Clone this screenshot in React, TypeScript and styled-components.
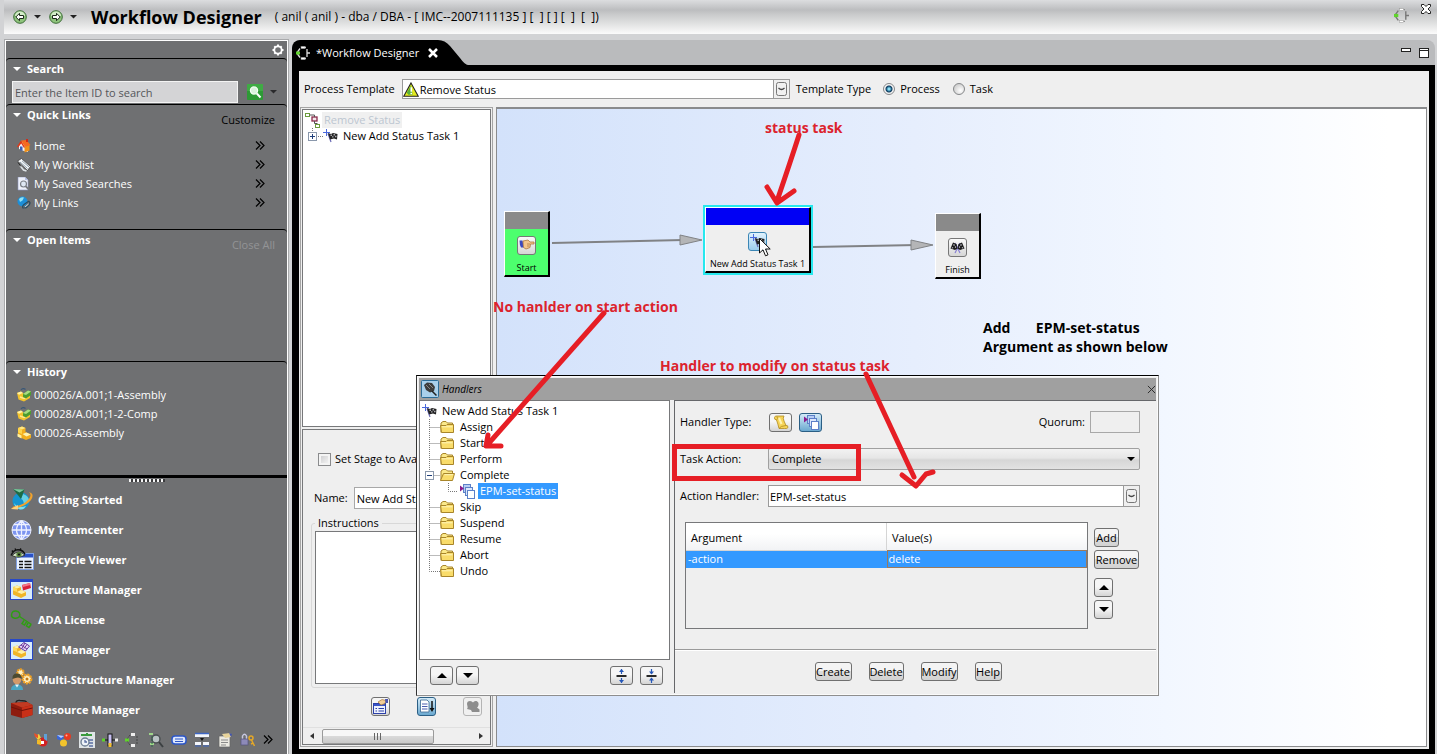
import React from "react";
import styled, { createGlobalStyle, css } from "styled-components";

const Global = createGlobalStyle`
  *, *::before, *::after { box-sizing: border-box; }
  body { margin: 0; background: #d2d3d5; }
  body, button, input, select, textarea {
    font-family: "Open Sans", "Noto Sans", sans-serif;
    font-size: 11px;
    line-height: 16px;
    color: #000;
  }
  button, input, select, textarea { margin: 0; border-radius: 0; }
  button { padding: 0; }
  h1, h2, p, ul { margin: 0; padding: 0; }
  a { color: inherit; text-decoration: none; }
  svg { display: block; flex: none; }
`;

/* ---------- shell ---------- */

const Shell = styled.div`
  display: flex;
  flex-direction: column;
  min-height: 100vh;
  background: #d2d3d5;
`;

const TitleBar = styled.header`
  display: flex;
  align-items: center;
  height: 34px;
  margin-left: 4px;
  margin-bottom: 6px;
  padding-left: 9px;
  background: linear-gradient(#dcdddf 0, #bcbdbf 10px, #c8c9ca 14px, #f6f6f6 32px, #fbfbfb 34px);
`;

const IconButton = styled.button<{ $gap?: number }>`
  display: flex;
  align-items: center;
  justify-content: center;
  border: 0;
  background: none;
  margin-right: ${(p) => p.$gap ?? 0}px;
`;

const Title = styled.h1`
  margin-left: 10px;
  font-size: 18px;
  line-height: 24px;
  white-space: nowrap;
`;

const Session = styled.span`
  margin-left: 13px;
  flex: 1;
  font-size: 12px;
  white-space: pre;
`;

const TitleActions = styled.div`
  display: flex;
  align-items: flex-start;
  gap: 12px;
  height: 34px;
  padding: 4px 6px 0 0;

  button:first-child { margin-top: 4px; }
`;

const Workspace = styled.div`
  display: flex;
  flex: 1;
  padding-left: 5px;
`;

/* ---------- sidebar ---------- */

const Sidebar = styled.aside`
  display: flex;
  flex-direction: column;
  width: 283px;
  margin-right: 4px;
  border: 1px solid #fff;
  border-bottom: 0;
  background: #6f7072;
  color: #fff;
  flex: none;
  outline: 1px solid #a9aaac;
`;

const SidebarTop = styled.div`
  display: flex;
  align-items: center;
  justify-content: flex-end;
  height: 17px;
  padding-right: 3px;
`;

const Section = styled.section<{ $height: number; $grow?: boolean }>`
  min-height: ${(p) => p.$height}px;
  ${(p) => p.$grow && css`flex: 1;`}
  border-top: 1px solid #000;
  border-radius: 4px;
  padding: 0 6px;
`;

const SectionHead = styled.div`
  display: flex;
  align-items: center;
  height: 20px;
`;

const Heading = styled.h2`
  display: flex;
  align-items: center;
  gap: 6px;
  flex: 1;
  padding-left: 1px;
  font-size: 11px;
  line-height: 20px;
`;

const HeadLink = styled.a<{ $dim?: boolean }>`
  margin: 10px 6px 0 0;
  color: ${(p) => (p.$dim ? "#939496" : "#000")};
`;

const SearchRow = styled.form`
  display: flex;
  align-items: center;
  margin-top: 2px;
`;

const SearchInput = styled.input`
  width: 226px;
  height: 22px;
  padding: 0 2px;
  border: 1px solid #f4f4f4;
  background: #d4d4d6;
  margin-right: 9px;

  &::placeholder { color: #55565a; opacity: 1; }
`;

const LinkList = styled.ul<{ $top: number }>`
  list-style: none;
  padding-top: ${(p) => p.$top}px;
`;

const LinkItem = styled.li`
  display: flex;
  align-items: center;
  gap: 3px;
  height: 19px;
  padding: 0 16px 0 5px;

  a { flex: 1; }
`;

const NavPane = styled.nav`
  border-top: 3px solid #000;
`;

const Grip = styled.div`
  width: 36px;
  height: 3px;
  margin: 1px auto 3px;
  background: repeating-linear-gradient(90deg, #f4f4f4 0 2px, #3c3c3e 2px 4px);
`;

const NavItem = styled.a`
  display: flex;
  align-items: center;
  gap: 4px;
  height: 30px;
  padding-left: 4px;
  font-weight: bold;
`;

const IconStrip = styled.div`
  display: flex;
  align-items: center;
  gap: 7px;
  height: 29px;
  padding-left: 27px;
`;

/* ---------- editor ---------- */

const Editor = styled.main`
  display: flex;
  flex-direction: column;
  flex: 1;
  min-width: 0;
  margin-right: 2px;
`;

const TabBar = styled.div`
  display: flex;
  align-items: stretch;
  justify-content: space-between;
  height: 25px;
  background: #babbbd;
  border-radius: 8px 8px 0 0;
  overflow: hidden;
`;

const Tab = styled.div`
  display: flex;
`;

const TabFace = styled.div`
  display: flex;
  align-items: center;
  gap: 6px;
  padding-left: 4px;
  background: #000;
  color: #fff;
  border-radius: 6px 0 0 0;

  button { margin-left: 3px; }
`;

const WindowButtons = styled.div`
  display: flex;
  align-items: center;
  gap: 8px;
  padding-right: 6px;
`;

const EditorBody = styled.div`
  position: relative;
  display: flex;
  flex-direction: column;
  flex: 1;
  border: solid #000;
  border-width: 6px 6px 5px 7px;
  background: #efefef;
`;

const Toolbar = styled.div`
  display: flex;
  align-items: center;
  height: 36px;
  padding-left: 5px;
`;

const Field = styled.div<{ $width?: number; $height: number }>`
  display: flex;
  align-items: center;
  ${(p) => (p.$width ? css`width: ${p.$width}px;` : css`flex: 1;`)}
  height: ${(p) => p.$height}px;
  border: 1px solid #9a9a9a;
  background: #fff;

  input { flex: 1; min-width: 0; height: 100%; border: 0; padding: 0 1px; background: none; }
`;

const DropButton = styled.button`
  display: flex;
  align-items: center;
  justify-content: center;
  align-self: stretch;
  width: 16px;
  border: 0;
  border-left: 1px solid #9a9a9a;
  background: #efefef;
`;

const ToolLabel = styled.label<{ $before?: number; $after?: number }>`
  margin-left: ${(p) => p.$before ?? 0}px;
  margin-right: ${(p) => p.$after ?? 0}px;
  white-space: nowrap;
`;

const Radio = styled.input`
  appearance: none;
  width: 12px;
  height: 12px;
  border: 1px solid #858789;
  border-radius: 50%;
  background: radial-gradient(circle at 65% 65%, #fff 0, #d8d8d8 60%, #c4c4c4 100%);

  &:checked {
    background: radial-gradient(circle, #8fdcf0 0 1px, #2f7ea3 2px, #123a5c 3px, #f4f4f4 4px);
  }
`;

const Split = styled.div`
  display: flex;
  flex: 1;
  padding: 0 2px 2px 1px;
`;

const LeftColumn = styled.div`
  display: flex;
  flex-direction: column;
  gap: 2px;
  width: 193px;
  margin-right: 3px;
  padding: 1px;
  border: 1px solid #a4a4a4;
  flex: none;
`;

const TreeBox = styled.div`
  flex: 1;
  border: 1px solid #77787a;
  background: #fff;
  padding: 2px 0 0 2px;
`;

const TreeRow = styled.div`
  display: flex;
  align-items: center;
  height: 16px;
  white-space: nowrap;
`;

const TreeLabel = styled.span<{ $state?: "faded" | "selected" }>`
  margin-left: 3px;
  padding: 0 2px;
  ${(p) => p.$state === "faded" && css`margin-left: 1px; color: #bcc6d0; background: #f0f0f0;`}
  ${(p) => p.$state === "selected" && css`color: #fff; background: #3399ff;`}
`;

const TaskPanel = styled.div`
  display: flex;
  flex-direction: column;
  height: 316px;
  border: 1px solid #77787a;
  overflow: hidden;
  white-space: nowrap;
`;

const StageRow = styled.label`
  display: flex;
  align-items: center;
  gap: 4px;
  margin: 21px 0 0 15px;
`;

const Check = styled.input`
  appearance: none;
  flex: none;
  width: 13px;
  height: 13px;
  border: 1px solid #8a8b8d;
  background: linear-gradient(135deg, #c8c8ca, #fafafa);
  box-shadow: inset 0 0 0 2px #f4f4f4;
`;

const NameRow = styled.div`
  display: flex;
  align-items: center;
  gap: 6px;
  margin: 20px 0 0 11px;

  input { width: 200px; height: 22px; border: 1px solid #a8a8a8; padding: 0 2px; flex: none; }
`;

const Instructions = styled.fieldset`
  width: 250px;
  height: 173px;
  margin: 6px 0 0 8px;
  padding: 0 3px;
  border: 1px solid #d8d8d8;
  border-radius: 3px;

  legend { padding: 0 3px; }
  textarea { display: block; width: 236px; height: 153px; border: 1px solid #77787a; resize: none; }
`;

const PanelButtons = styled.div`
  display: flex;
  gap: 27px;
  margin: 9px 0 0 68px;
`;

const ToolButton = styled.button<{ $w: number; $h: number; $on?: boolean; $off?: boolean }>`
  display: flex;
  align-items: center;
  justify-content: center;
  width: ${(p) => p.$w}px;
  height: ${(p) => p.$h}px;
  border: 1px solid ${(p) => (p.$off ? "#b4b4b4" : p.$on ? "#2b5f85" : "#707070")};
  border-radius: 3px;
  background: ${(p) =>
    p.$off ? "#f0f0f0" : p.$on ? "linear-gradient(#d4ebf8, #6ba9d0)" : "linear-gradient(#f6f6f6 45%, #d4d4d4)"};
  flex: none;
`;

const ScrollBar = styled.div`
  display: flex;
  align-items: center;
  gap: 8px;
  height: 17px;
  margin-top: auto;
  padding: 0 7px;
  border-top: 1px solid #e0e0e0;
`;

const Thumb = styled.div`
  display: flex;
  align-items: center;
  justify-content: center;
  width: 112px;
  height: 15px;
  margin-right: auto;
  border: 1px solid #9b9b9b;
  border-radius: 2px;
  background: linear-gradient(#f7f7f7 45%, #d9d9d9 50%, #c9c9c9);
`;

/* ---------- process diagram ---------- */

const Canvas = styled.div`
  position: relative;
  flex: 1;
  min-width: 0;
  border: 1px solid #8a8b8d;
  border-top-width: 2px;
  background: linear-gradient(90deg, #d3e2fb, #e6eefd 45%, #f2f7ff 72%, #fff 96%);
`;

const Flow = styled.svg`
  position: absolute;
  left: 0;
  top: 0;
`;

const Node = styled.div<{ $x: number; $y: number; $w: number; $fill?: string; $selected?: boolean }>`
  position: absolute;
  left: ${(p) => p.$x}px;
  top: ${(p) => p.$y}px;
  width: ${(p) => p.$w}px;
  height: 66px;
  display: flex;
  flex-direction: column;
  align-items: center;
  justify-content: space-between;
  border: solid;
  border-width: 1px 2px 2px 1px;
  border-color: #fff #000 #000 #fff;
  background: ${(p) => p.$fill ?? "#efefef"};
  outline: ${(p) => (p.$selected ? "2px solid #27e8ee" : "0")};
  font-size: 9px;
  line-height: 14px;
  white-space: nowrap;
`;

const NodeHead = styled.div<{ $color: string }>`
  width: 100%;
  height: 17px;
  background: ${(p) => p.$color};
`;

const NodeIcon = styled.div<{ $on?: boolean }>`
  display: flex;
  align-items: center;
  justify-content: center;
  width: 19px;
  height: 19px;
  border: 1px solid ${(p) => (p.$on ? "#3b86b5" : "#777")};
  border-radius: 3px;
  background: ${(p) => (p.$on ? "linear-gradient(#e0f2fd, #9dcdee)" : "linear-gradient(#fafafa, #d6d6d6)")};
`;

const Pointer = styled.svg`
  position: absolute;
  left: 53px;
  top: 30px;
`;

/* ---------- handlers window ---------- */

const Dialog = styled.section`
  position: absolute;
  left: 117px;
  top: 304px;
  width: 743px;
  height: 321px;
  display: flex;
  flex-direction: column;
  padding: 2px;
  border: 1px solid #8e8e8e;
  border-top-color: #000;
  border-left-color: #333;
  background: #efefef;
  box-shadow: inset 0 0 0 1px #fafafa;
`;

const DialogTitle = styled.div`
  display: flex;
  align-items: center;
  height: 22px;
  padding: 0 0 0 2px;
  background: #a0a0a0;
  font-size: 10px;
  font-style: italic;

  span { flex: 1; margin-left: 3px; }
`;

const DialogBody = styled.div`
  display: flex;
  flex: 1;
  min-height: 0;
`;

const HandlerSide = styled.div`
  display: flex;
  flex-direction: column;
  width: 251px;
  margin-right: 4px;
`;

const HandlerTree = styled.div`
  height: 260px;
  border: 1px solid #77787a;
  background: #fff;
  padding: 2px 0 0 2px;
`;

const SideButtons = styled.div`
  display: flex;
  gap: 3px;
  padding: 6px 7px 0 11px;

  button:nth-child(3) { margin-left: auto; margin-right: 4px; }
`;

const HandlerForm = styled.form`
  display: flex;
  flex-direction: column;
  flex: 1;
  min-width: 0;
  border-left: 1px solid #66676a;
  border-top: 1px solid #66676a;
`;

const FormRow = styled.div<{ $top: number }>`
  display: flex;
  align-items: center;
  height: 22px;
  margin: ${(p) => p.$top}px 16px 0 5px;

  & > label:first-child, & > span:first-child { width: 88px; white-space: nowrap; }
`;

const TypeButtons = styled.div`
  display: flex;
  flex: 1;
  gap: 7px;
  padding-left: 1px;
`;

const Quorum = styled.input`
  width: 50px;
  height: 22px;
  margin-left: 5px;
  border: 1px solid #a8a8a8;
  background: #efefef;
`;

const SelectWrap = styled.div`
  position: relative;
  flex: 1;

  select {
    appearance: none;
    display: block;
    width: 100%;
    height: 22px;
    padding: 0 3px;
    border: 1px solid #a0a0a0;
    border-radius: 2px;
    background: linear-gradient(#f2f2f2 0, #e6e6e6 45%, #d6d6d6 55%, #e2e2e2);
  }
  svg { position: absolute; right: 5px; top: 9px; pointer-events: none; }
`;

const ArgArea = styled.div`
  display: flex;
  gap: 6px;
  margin: 15px 16px 0 10px;
`;

const ArgFrame = styled.div`
  flex: 1;
  height: 107px;
  border: 1px solid #77787a;
`;

const ArgTable = styled.table`
  width: 100%;
  border-collapse: collapse;
  table-layout: fixed;

  th, td { text-align: left; font-weight: normal; }
  th {
    height: 27px;
    padding: 3px 5px 0;
    border-bottom: 1px solid #d5d5d5;
    background: linear-gradient(#fff 40%, #f2f3f5);
  }
  th + th { border-left: 1px solid #d5d5d5; }
  td { height: 18px; padding: 0 2px; background: #3399ff; color: #fff; }
  td + td { outline: 1px solid #9c7a5c; outline-offset: -1px; }
`;

const ArgButtons = styled.div`
  display: flex;
  flex-direction: column;
  align-items: flex-start;
  gap: 3px;
  width: 46px;
  padding-top: 6px;
`;

const TextButton = styled.button<{ $w: number }>`
  display: flex;
  align-items: center;
  justify-content: center;
  width: ${(p) => p.$w}px;
  height: 19px;
  border: 1px solid #707070;
  border-radius: 3px;
  background: linear-gradient(#f4f4f4 45%, #dcdcdc 50%, #d2d2d2);
`;

const ArrowPair = styled.div`
  display: flex;
  flex-direction: column;
  gap: 3px;
  margin-top: 6px;
`;

const FormFoot = styled.div`
  display: flex;
  align-items: center;
  justify-content: center;
  gap: 17px;
  flex: 1;
  margin-top: 20px;
  padding-right: 15px;
  border-top: 1px solid #9a9a9a;
  box-shadow: inset 0 1px 0 #fff;
`;

/* ---------- callouts ---------- */

const Note = styled.p<{ $x: number; $y: number; $color?: string }>`
  position: absolute;
  left: ${(p) => p.$x}px;
  top: ${(p) => p.$y}px;
  color: ${(p) => p.$color ?? "#dc232d"};
  font-family: "Open Sans", "Noto Sans", sans-serif;
  font-size: 14px;
  font-weight: bold;
  line-height: 19px;
  white-space: pre;
`;

const Frame = styled.div`
  position: absolute;
  left: 373px;
  top: 373px;
  width: 189px;
  height: 37px;
  border: 5px solid #e61e25;
  pointer-events: none;
`;

const Strokes = styled.svg`
  position: absolute;
  left: 181px;
  top: 60px;
  pointer-events: none;
`;

/* ---------- icons ---------- */

const Tri = ({ color = "#000", w = 8, up }: { color?: string; w?: number; up?: boolean }) => (
  <svg width={w} height={w / 2} viewBox="0 0 8 4">
    <path d={up ? "M0 4L4 0L8 4Z" : "M0 0H8L4 4Z"} fill={color} />
  </svg>
);

const SideTri = ({ left }: { left?: boolean }) => (
  <svg width="4" height="6" viewBox="0 0 4 6">
    <path d={left ? "M4 0V6L0 3Z" : "M0 0V6L4 3Z"} fill="#333" />
  </svg>
);

const RoundArrow = ({ back }: { back?: boolean }) => (
  <svg width="14" height="14" viewBox="0 0 14 14">
    <circle cx="7" cy="7" r="6.3" fill="#8fc47c" stroke="#3d6b38" />
    <path d="M2 6a5 4.5 0 0 1 10 0" fill="#d4edc9" />
    <path
      d={back ? "M2.8 7L6.5 3.3V5.5H10.5V8.5H6.5V10.7Z" : "M11.2 7L7.5 3.3V5.5H3.5V8.5H7.5V10.7Z"}
      fill="#fff" stroke="#1c2b1a"
    />
  </svg>
);

const Ring = ({ size = 14, ink = "#ddd" }: { size?: number; ink?: string }) => (
  <svg width={size} height={size} viewBox="0 0 14 14">
    <path d="M4 2.500L1.500 6M1.500 8L4 11.500M6 1.500H10M6 12.500H10M11 3V11M11 7H14" fill="none" stroke={ink} strokeWidth="1.3" />
    <rect x="5" y="0.5" width="4" height="2" fill="#fff" stroke="#999" strokeWidth="0.5" />
    <rect x="5" y="11.5" width="4" height="2" fill="#fff" stroke="#999" strokeWidth="0.5" />
    <rect x="0" y="5.5" width="4" height="3" fill="#5fd42a" />
  </svg>
);

const Gear = () => (
  <svg width="12" height="12" viewBox="0 0 12 12">
    <circle cx="6" cy="6" r="3.7" fill="none" stroke="#fff" strokeWidth="1.8" />
    <path d="M6 0.500V2.500M6 9.500V11.500M0.500 6H2.500M9.500 6H11.500M2.300 2.300L3.500 3.500M8.500 8.500L9.700 9.700M9.700 2.300L8.500 3.500M3.500 8.500L2.300 9.700" stroke="#fff" strokeWidth="2" />
  </svg>
);

const SearchIcon = () => (
  <svg width="16" height="16" viewBox="0 0 16 16">
    <rect width="16" height="16" rx="1" fill="#2d9a35" />
    <rect width="16" height="7" fill="#4bb84f" opacity="0.6" />
    <circle cx="7" cy="6.5" r="3.6" fill="#d9f2dc" stroke="#f6fff6" strokeWidth="1.2" />
    <path d="M9.8 9.5L13.5 13.5" stroke="#fff" strokeWidth="2" />
  </svg>
);

const Chevrons = () => (
  <svg width="10" height="9" viewBox="0 0 10 9">
    <path d="M1 0.5L5 4.5L1 8.5M5 0.5L9 4.5L5 8.5" fill="none" stroke="#000" strokeWidth="1.2" />
  </svg>
);

const HomeIcon = () => (
  <svg width="14" height="14" viewBox="0 0 14 14">
    <path d="M2 6.5L5 3L11 6V13L7 12L2 10Z" fill="#f3f3f3" />
    <path d="M7.5 8L12.5 5V11.5L7.5 13.5Z" fill="#f09018" />
    <path d="M0 7.5L4 1.5L8 8L7 9L4.2 4.5L1 8.5Z" fill="#e03818" />
    <path d="M4 1.5L9.5 1L13.5 6L8 8Z" fill="#f46a20" />
    <rect x="3" y="7.5" width="2.5" height="4" fill="#3f5fb8" />
    <path d="M9 0H11V3H9Z" fill="#d02a1a" />
  </svg>
);

const WorklistIcon = () => (
  <svg width="14" height="14" viewBox="0 0 14 14">
    <path d="M0.5 3L4.500 0.500L13.500 8.500L10.500 12.500Z" fill="#f4f6f8" stroke="#444" strokeWidth="0.8" />
    <path d="M3 4L10.500 10.500M5 2.800L12 9" stroke="#8b9ca8" />
    <path d="M3 7.500L6.500 12L9.500 13" fill="none" stroke="#dde2e5" strokeWidth="1.6" />
    <path d="M1 4.5L4 8.5" stroke="#2c2c2c" />
  </svg>
);

const SavedIcon = () => (
  <svg width="14" height="14" viewBox="0 0 14 14">
    <path d="M1 0H8L11 3V13H1Z" fill="#eef1fb" stroke="#8d98c0" strokeWidth="0.6" />
    <path d="M8 0V3H11Z" fill="#b8c2e4" />
    <circle cx="6.5" cy="7" r="3" fill="#dfe8f4" stroke="#7b8088" strokeWidth="1.2" />
    <path d="M8.8 9.3L12.5 13" stroke="#75787c" strokeWidth="1.8" />
  </svg>
);

const LinksIcon = () => (
  <svg width="14" height="14" viewBox="0 0 14 14">
    <circle cx="5.5" cy="5.5" r="5" fill="#1d8fd8" />
    <path d="M2 3Q4 0.5 7 1.5L5.5 4.5L3 6Z" fill="#8fe2f6" />
    <path d="M6.5 12.5Q4.5 10.5 7 8.5L10.5 6Q12.5 4.500 13 7Q13 9 10 11Q8.5 12.5 7.5 11.5" fill="none" stroke="#2c4c5e" strokeWidth="1.3" />
    <path d="M8 11L11.5 8" stroke="#c7d6de" />
  </svg>
);

const ItemIcon = ({ rev }: { rev?: boolean }) => (
  <svg width="14" height="14" viewBox="0 0 14 14">
    {rev ? (
      <>
        <path d="M4 2Q6 -0.5 8.5 1.5" fill="none" stroke="#3b5878" strokeWidth="1.2" />
        <path d="M0 5L4 3.5L6.5 5.5L8 8L11.5 5.5L13 7.5V10L7 13.5L1.5 11.5Z" fill="#f4c32c" />
        <path d="M0 5L4 3.5L6 5L2 6.8Z" fill="#fff2a4" />
        <path d="M3 9L7 10.500L10 9" fill="none" stroke="#ffe98c" strokeWidth="1.4" />
        <path d="M6 6L11 2.5L14 3.5V7L9 10.5L6 9Z" fill="#4b9c2e" />
        <path d="M6 6L11 2.5L14 3.5L9 7Z" fill="#a9dc80" />
      </>
    ) : (
      <>
        <path d="M1 2L5 0.500L8.500 2V6L14 8.500V12L9 14L1 10.500Z" fill="#f3ae1c" />
        <path d="M1 2L5 0.500L8.500 2L5 3.500Z" fill="#ffe784" />
        <path d="M1 2L5 3.500V8L1 6.500Z" fill="#ffd64a" />
        <path d="M5.5 8L9.5 6.500L14 8.500L9.500 10.500Z" fill="#fff3b0" />
        <path d="M0.5 7.500L4.500 9.500V12.500L0.500 10.500Z" fill="#fff0a0" />
      </>
    )}
  </svg>
);

const GlobeArrow = () => (
  <svg width="24" height="24" viewBox="0 0 24 24">
    <circle cx="11" cy="13" r="8.5" fill="#1594d0" />
    <path d="M4 15Q8 21 16 18Q14 22 10 21.5Q5 20 4 15Z" fill="#7be0ee" />
    <path d="M13 6Q19 8 19 13L14 16Q13 11 11 11Z" fill="#67cfe4" />
    <path d="M3 1L14.500 1.500L11 11Z" fill="#1c6b45" />
    <path d="M3 1L14.500 1.500L9.500 4.500Z" fill="#7fc79e" />
    <path d="M19 4Q25 6 21 12Q16 18 7 20L1 21L3.5 18.5Q13 18 19 11Q22 7 19 4Z" fill="#f2a32c" />
    <path d="M1 21L8 17V21.5Z" fill="#ffd27c" />
  </svg>
);

const GlobeGrid = () => (
  <svg width="24" height="24" viewBox="0 0 24 24">
    <circle cx="11.5" cy="12" r="9.5" fill="#7c94f0" stroke="#e6ebff" />
    <path d="M11.5 2.5V21.5M2 12H21M3.8 6.5H19.2M3.8 17.5H19.2M11.5 2.5Q1.5 12 11.5 21.5M11.5 2.5Q21.5 12 11.5 21.5" fill="none" stroke="#eef1ff" strokeWidth="1.3" />
  </svg>
);

const LifecycleIcon = () => (
  <svg width="24" height="24" viewBox="0 0 24 24">
    <rect x="6.5" y="5.5" width="17" height="16" fill="#eaf2ff" stroke="#7f9fe0" />
    <path d="M7 6H23V9.500H7Z" fill="#2a52c8" />
    <path d="M9 13.5H13M14.5 13.5H21.500M9 16.5H13M14.5 16.5H21.500M9 19.5H13M14.5 19.5H21.500" stroke="#111" strokeWidth="1.3" />
    <path d="M2 7.500Q8 1 15 7Q8 11 2 7.500Z" fill="#cfe0c0" stroke="#222" strokeWidth="0.8" />
    <circle cx="9" cy="6.5" r="2.6" fill="#56803a" />
    <circle cx="9" cy="6.5" r="1.1" fill="#111" />
    <path d="M1 7.500Q4 0.500 10 2Q13 2.500 15 6M3 4L2 2.500M6 2.500L5 0.500M10 2L11 0.500" fill="none" stroke="#111" strokeWidth="1.4" />
  </svg>
);

const AppTile = ({ cae }: { cae?: boolean }) => (
  <svg width="24" height="24" viewBox="0 0 24 24">
    <rect x="0.5" y="1.5" width="22" height="20" fill="#d9ecfb" stroke="#2748c8" />
    <path d="M1 2H22V4H1Z" fill="#2748c8" />
    <path d="M3 9L7 7.5L11 9V12L16 14V17.5L11 20L3 16.5Z" fill="#f0b52a" />
    <path d="M3 9L7 7.5L11 9L7 10.5Z" fill="#fff0a8" />
    <path d="M3 9L7 10.5V14L3 12.5Z" fill="#ffd95e" />
    <path d="M7 14L11 12L16 14L11.5 16Z" fill="#fff0a8" />
    {cae ? (
      <>
        <path d="M8.5 9L14 4.5L19.5 8L15.5 13Z" fill="#e8d5f6" stroke="#6a3a9c" />
        <path d="M11 7L17 11M14 10.5L17 6.5M11.5 11L15 5" stroke="#6a3a9c" />
      </>
    ) : (
      <>
        <path d="M12 7L20 5L21 10L13 12.5Z" fill="#d8203a" />
        <path d="M12 7L20 5L20.5 7L13 9Z" fill="#f47688" />
      </>
    )}
  </svg>
);

const KeyIcon = () => (
  <svg width="24" height="24" viewBox="0 0 24 24">
    <path d="M1.500 7Q2 2.500 6 3Q11 4 9.500 8.500Q7 11 4 10Q1.500 9.500 1.500 7Z" fill="none" stroke="#2f9e12" strokeWidth="1.5" />
    <path d="M9.5 8.5L21.500 16.500M14 12.500L12 15.500L14.500 17L16.500 14M18 15L16.500 18L19 19.500L21 16.500" fill="none" stroke="#2f9e12" strokeWidth="1.4" />
  </svg>
);

const PersonGear = () => (
  <svg width="24" height="24" viewBox="0 0 24 24">
    <circle cx="10.5" cy="4.5" r="3.2" fill="#fff0c0" stroke="#e8981c" strokeWidth="2.2" strokeDasharray="2 0.8" />
    <circle cx="17" cy="11" r="4.2" fill="#fff0c0" stroke="#f0a020" strokeWidth="2.4" strokeDasharray="2 0.8" />
    <circle cx="17" cy="11" r="1.5" fill="#c07818" />
    <ellipse cx="7" cy="11.5" rx="4.2" ry="5" fill="#d49a6a" />
    <path d="M2.5 11Q2 5.5 7 5.5Q12 5.5 11.5 11Q9 8 2.5 11Z" fill="#4c4a30" />
    <path d="M1 22Q1 16.5 7 16.5Q13 16.5 13 22Z" fill="#4ba6c4" />
    <path d="M5 16.5L7 19.5L9 16.5Z" fill="#e9f6fa" />
  </svg>
);

const Toolbox = () => (
  <svg width="24" height="24" viewBox="0 0 24 24">
    <path d="M6 5Q6 2 10 2.5L15 3Q17 3.5 17 6" fill="none" stroke="#222" strokeWidth="1.3" />
    <path d="M1 5L17 4L22.5 7V17L12 20L1 17Z" fill="#8e1c0e" />
    <path d="M1 5L17 4L22.5 7L12 9.500Z" fill="#c23a22" />
    <path d="M12 9.5L22.5 7V17L12 20Z" fill="#c83018" />
    <path d="M1 9L12 12.5L22.5 10" fill="none" stroke="#701008" />
  </svg>
);

const stripIcons: React.ReactNode[] = [
  <>
    <path d="M2 4L6 2L8 6L5 8Z" fill="#f4d23c" /><path d="M1 1L5 3V6L2 5Z" fill="#e8502c" />
    <circle cx="10" cy="10" r="4.5" fill="#d22222" /><path d="M4 8L8 7V13L4 12Z" fill="#f2ba28" />
    <path d="M11 2H14V9L11 7Z" fill="#5ea0d8" /><path d="M8 9H11V12H8Z" fill="#fff" />
  </>,
  <>
    <path d="M1 3L8 4L6 9L1 7Z" fill="#3a66d8" /><path d="M1 3L8 4L5 6Z" fill="#b8d0ff" />
    <circle cx="11.5" cy="4.5" r="3.5" fill="#e83a20" /><circle cx="7.5" cy="11" r="3.5" fill="#f2c42c" />
    <circle cx="10.5" cy="3.5" r="1" fill="#ffb09c" />
  </>,
  <>
    <rect width="16" height="16" fill="#dfe4e6" /><path d="M2 3H13M8 1V3" stroke="#3a9a3e" strokeWidth="2" />
    <circle cx="6" cy="10" r="4" fill="#eef4fa" stroke="#6a7c92" strokeWidth="1.3" /><path d="M6 8V10H8M10 8H14M10 11H14M10 14H14" stroke="#5a6ea2" strokeWidth="1.3" fill="none" />
  </>,
  <>
    <path d="M1 8H15" stroke="#111" /><rect x="6" y="2" width="4" height="12" fill="#c8c0f4" stroke="#111" />
    <rect x="0" y="6.5" width="3" height="3" fill="#5fd42a" /><rect x="13" y="6.5" width="3" height="3" fill="#eee" /><rect x="6.5" y="11" width="3" height="4" fill="#f2c030" />
  </>,
  <>
    <path d="M5 3L2 7M2 9L5 13M12 4V12" stroke="#444" fill="none" strokeDasharray="2 1" />
    <rect x="6" y="1" width="4" height="3" fill="#eee" /><rect x="6" y="12" width="4" height="3" fill="#eee" /><rect x="0" y="6.5" width="4" height="3" fill="#5fd42a" />
  </>,
  <>
    <path d="M1 2H5M2 12H6" stroke="#9fd68a" strokeWidth="2" /><circle cx="8" cy="7" r="4" fill="#b9c2c4" stroke="#4b5052" strokeWidth="1.5" />
    <path d="M11 10L15 15" stroke="#3c4042" strokeWidth="2" /><path d="M4 4V15" stroke="#2e6648" strokeDasharray="2 1" />
  </>,
  <>
    <rect x="1" y="4" width="14" height="8" rx="3" fill="#dfe8fc" stroke="#2c56c8" strokeWidth="1.5" />
    <path d="M4 7H12M4 9.5H12" stroke="#2c56c8" strokeWidth="1.2" />
  </>,
  <>
    <rect x="1" y="1" width="14" height="4" fill="#f4f6fb" /><path d="M1 1.500H15" stroke="#3d66c4" strokeWidth="1.5" /><path d="M6 6H10L8 9Z" fill="#111" />
    <rect x="1" y="10" width="6" height="3" fill="#f4f6fb" /><rect x="9" y="10" width="6" height="3" fill="#f4f6fb" /><path d="M1 14H7M9 14H15" stroke="#3d66c4" />
  </>,
  <>
    <path d="M2 4H13V15H2Z" fill="#eceae2" stroke="#666" strokeWidth="0.7" /><path d="M4 8H11M4 10.5H11M4 13H9" stroke="#8a8a8a" />
    <path d="M5 2L13 1L14 5L8 6Z" fill="#e8d49c" /><path d="M12 1L15 2L14 5Z" fill="#4255b0" />
  </>,
  <>
    <path d="M2.5 7V4Q4.5 0.5 6.5 4V7" fill="none" stroke="#c6c6de" strokeWidth="1.5" /><rect x="1" y="7" width="7" height="6" fill="#8d8ab8" stroke="#55527c" strokeWidth="0.7" />
    <circle cx="11" cy="6" r="2" fill="none" stroke="#e4a828" strokeWidth="1.5" /><path d="M11.5 8L14.5 14M13 11L11 12" stroke="#e4a828" strokeWidth="1.5" />
  </>,
];

const WarningIcon = () => (
  <svg width="16" height="15" viewBox="0 0 15 14">
    <path d="M7.5 0.8L14.3 13.3H0.7Z" fill="#e3ea1e" stroke="#222" />
    <path d="M7.5 3L9 12H5L3.5 10Z" fill="#58b038" />
    <path d="M7 5H8.5V9H7ZM7 10H8.5V11.5H7Z" fill="#fff" />
  </svg>
);

const TemplateIcon = () => (
  <svg width="16" height="16" viewBox="0 0 16 16">
    <rect x="0.5" y="1.5" width="4" height="3" fill="#fff" stroke="#6b9c3c" />
    <rect x="7" y="5" width="5" height="4" fill="#f4e6ea" stroke="#8a2a4a" strokeWidth="1.3" />
    <rect x="10.5" y="12.5" width="4" height="3" fill="#fff" stroke="#6b9c3c" />
    <path d="M4.5 3H9.5V5M9.5 9V11.5H12.5" fill="none" stroke="#555" />
  </svg>
);

const FlagIcon = () => (
  <svg width="15" height="14" viewBox="0 0 15 14">
    <path d="M0 3.5H7M3.5 0V7" stroke="#4a68dc" />
    <path d="M5 4.500L8 13" stroke="#6a6ab4" strokeWidth="1.2" />
    <path d="M5 4L8 5L10 4L14.500 5L14 10.500L11 9.500L7 10.500Z" fill="#222" />
    <path d="M7.500 5.500H9V7H7.500ZM10.500 5H12V6.500H10.500ZM9 7.200H10.500V8.500H9ZM12 6.800H13.500V8.200H12Z" fill="#a9a9ae" />
  </svg>
);

const Folder = ({ open }: { open?: boolean }) => (
  <svg width="15" height="14" viewBox="0 0 15 14">
    <path d="M1 12.5V3L3 1.5H6L7.5 3H12.5V5" fill="#fbe98a" stroke="#a8852a" />
    <path d={open ? "M0.5 12.5L3.5 5.5H14.5L12.5 12.5Z" : "M0.5 5.5H6L7 4.5H13.5V12.5H1.5Z"} fill="#f9dc6a" stroke="#a8852a" />
    <path d={open ? "M4.5 6.7H13" : "M2 6.8H12.5"} stroke="#fff6bc" />
  </svg>
);

const HandlerIcon = () => (
  <svg width="16" height="15" viewBox="0 0 16 15">
    <rect x="4.5" y="0.5" width="7" height="8" fill="#b8cdf4" stroke="#5c80c8" />
    <rect x="6.5" y="3.5" width="7" height="8" fill="#dce8fc" stroke="#5c80c8" />
    <rect x="8.5" y="6.5" width="7" height="8" fill="#fff" stroke="#5c80c8" />
    <path d="M1 1.5L5 4.5L1 7.500Z" fill="#8a1a8c" />
  </svg>
);

const ScrollIcon = () => (
  <svg width="16" height="15" viewBox="0 0 16 15">
    <path d="M1.5 2.5Q2 0.5 4 1H11Q9.500 3 11 6L13 10.5Q15 10 15 12.5Q14 14 11.5 13.5L6 13.5Q5 9 3.5 5Q1 4.5 1.5 2.5Z" fill="#f6d458" stroke="#b08a20" strokeWidth="0.800" />
    <path d="M3.5 5Q5.5 4 4 1.5M6 13.5Q7 11 13 10.5" fill="none" stroke="#b08a20" strokeWidth="0.8" />
    <path d="M6 3L8.500 9" stroke="#fff3b4" strokeWidth="2" />
  </svg>
);

const PinIcon = () => (
  <svg width="18" height="18" viewBox="0 0 18 18">
    <rect x="0.5" y="0.5" width="17" height="17" rx="1" fill="#a9d0ec" stroke="#2b6c98" />
    <path d="M3 5L6 2.500L11 3L14 7L13 11L9 12.500L5 10Z" fill="#3c3c3c" />
    <path d="M11 11L15.500 15.500" stroke="#222" strokeWidth="1.5" />
    <path d="M5 5L9 9M8 4L12 8" stroke="#888" />
  </svg>
);

const Checkered = () => (
  <svg width="15" height="13" viewBox="0 0 15 13">
    <path d="M5 2L10 12M10 2L5 12" stroke="#8880d4" strokeWidth="1.2" />
    <path d="M3 1.500L6.500 3L7.500 7.500L5 9L0.500 7.500Z" fill="#1a1a1a" />
    <path d="M12 1.500L8.500 3L7.500 7.500L10 9L14.500 7.500Z" fill="#1a1a1a" />
    <path d="M3.500 3L4.800 3.500L4.500 5L3.200 4.500ZM2 6L3.300 6.400L3 7.600L1.700 7.200ZM5 5.200L6.200 5.600L6 7L4.800 6.600ZM11.500 3L10.200 3.500L10.500 5L11.800 4.500ZM13 6L11.700 6.400L12 7.600L13.300 7.200ZM10 5.200L8.800 5.600L9 7L10.200 6.600Z" fill="#b9b9c2" />
  </svg>
);

const HandIcon = () => (
  <svg width="16" height="12" viewBox="0 0 16 12">
    <path d="M0.5 1.5H3.5L5 8.5H2Q0.5 6 0.5 1.5Z" fill="#3c48c0" />
    <path d="M4 2L9 1L11 3H15V5H11.5L11 8.5L7 10L4.5 8.5Z" fill="#f4c58c" stroke="#b07a40" strokeWidth="0.8" />
    <path d="M8 5H11M8 7H10.5" stroke="#b07a40" strokeWidth="0.8" />
  </svg>
);

const PropIcon = () => (
  <svg width="17" height="17" viewBox="0 0 17 17">
    <rect x="1.5" y="5.5" width="12" height="10" fill="#eef2fd" stroke="#2c40a8" />
    <path d="M2 6H13V8H2Z" fill="#3a55c8" />
    <path d="M3.5 10.5H5M6.5 10.5H12M3.5 13H5M6.5 13H12" stroke="#2c40a8" strokeWidth="1.2" />
    <path d="M6 4L10 1.5L14 2.5L13 5.5L9 7Z" fill="#f4cf98" stroke="#a87838" strokeWidth="0.7" />
    <path d="M13 1H16V5H13.5Z" fill="#4a55b0" />
  </svg>
);

const SheetDown = () => (
  <svg width="16" height="15" viewBox="0 0 16 15">
    <path d="M1.5 1H8L10 3V13H1.5Z" fill="#fff" stroke="#3a6690" strokeWidth="0.8" />
    <path d="M3 5H8.5M3 7.5H8.5M3 10H8.5" stroke="#4a5cae" />
    <path d="M13 2V10" stroke="#111" strokeWidth="1.5" />
    <path d="M10.5 9H15.5L13 13Z" fill="#111" />
  </svg>
);

const BlobIcon = () => (
  <svg width="14" height="13" viewBox="0 0 14 13">
    <path d="M1 4Q1 1 4 1Q6 1 7 2.500Q8 0.500 10.500 1Q13 2 12.500 5Q12 7 11 7.500L13.500 9.500V12H6L5 10L1 9Q2 7.500 1.500 6.500Z" fill="#8d8d8d" />
  </svg>
);

const SplitArrows = ({ inward }: { inward?: boolean }) => (
  <svg width="13" height="16" viewBox="0 0 13 16">
    <path d="M1.500 8H11.500" stroke="#111" strokeWidth="1.8" />
    <path d="M6.500 1V6M6.500 10V15" stroke="#2456b8" strokeWidth="1.2" />
    <path
      d={inward ? "M4 3.500H9L6.500 6.500ZM4 12.500H9L6.500 9.500Z" : "M4 4H9L6.500 1ZM4 12H9L6.500 15Z"}
      fill="#2456b8"
    />
  </svg>
);

const ComboGlyph = () => (
  <svg width="11" height="16" viewBox="0 0 11 16">
    <rect x="0.5" y="1.5" width="10" height="13" rx="2" fill="#f0f0f0" stroke="#777" />
    <path d="M2.5 7Q5.500 10 8.5 7" fill="none" stroke="#444" strokeWidth="1.2" />
  </svg>
);

const Close = ({ color, w = 2, size = 10 }: { color: string; w?: number; size?: number }) => (
  <svg width={size} height={size} viewBox="0 0 10 10">
    <path d="M1 1L9 9M9 1L1 9" stroke={color} strokeWidth={w} />
  </svg>
);

const OutlineClose = () => (
  <svg width="10" height="10" viewBox="0 0 10 10">
    <path d="M0.5 0.5H3L5 2.5L7 0.5H9.5V2.5L7 5L9.5 7.5V9.5H7L5 7.5L3 9.5H0.5V7.5L3 5L0.5 2.5Z" fill="#fff" stroke="#222" />
  </svg>
);

type BranchKind = "mid" | "last" | "minus" | "plus" | "leaf";

const Branch = ({ kind }: { kind: BranchKind }) => {
  const dots = { stroke: "#777", strokeDasharray: "1 1", fill: "none" };
  if (kind === "leaf")
    return (
      <svg width="37" height="16">
        <path d="M7.5 0V16" {...dots} />
        <path d="M26.5 0V8.5H36" {...dots} />
      </svg>
    );
  const box = kind === "minus" || kind === "plus";
  return (
    <svg width="18" height="16">
      <path d={kind === "last" || kind === "plus" ? "M7.5 0V8.5H18" : "M7.5 0V16M7.5 8.5H18"} {...dots} />
      {box && (
        <>
          <rect x="3.5" y="4.5" width="8" height="8" fill="#fff" stroke="#8a98ac" />
          <path d={kind === "plus" ? "M5 8.5H10M7.5 6V11" : "M5 8.5H10"} stroke="#1f3f7a" />
        </>
      )}
    </svg>
  );
};

/* ---------- data ---------- */

const quickLinks = [
  { label: "Home", icon: <HomeIcon /> },
  { label: "My Worklist", icon: <WorklistIcon /> },
  { label: "My Saved Searches", icon: <SavedIcon /> },
  { label: "My Links", icon: <LinksIcon /> },
];

const historyItems = [
  { label: "000026/A.001;1-Assembly", rev: true },
  { label: "000028/A.001;1-2-Comp", rev: true },
  { label: "000026-Assembly", rev: false },
];

const apps = [
  { label: "Getting Started", icon: <GlobeArrow /> },
  { label: "My Teamcenter", icon: <GlobeGrid /> },
  { label: "Lifecycle Viewer", icon: <LifecycleIcon /> },
  { label: "Structure Manager", icon: <AppTile /> },
  { label: "ADA License", icon: <KeyIcon /> },
  { label: "CAE Manager", icon: <AppTile cae /> },
  { label: "Multi-Structure Manager", icon: <PersonGear /> },
  { label: "Resource Manager", icon: <Toolbox /> },
];

const actions: { label: string; kind: BranchKind }[] = [
  { label: "Assign", kind: "mid" },
  { label: "Start", kind: "mid" },
  { label: "Perform", kind: "mid" },
  { label: "Complete", kind: "minus" },
  { label: "EPM-set-status", kind: "leaf" },
  { label: "Skip", kind: "mid" },
  { label: "Suspend", kind: "mid" },
  { label: "Resume", kind: "mid" },
  { label: "Abort", kind: "mid" },
  { label: "Undo", kind: "last" },
];

/* ---------- page ---------- */

const SectionTitle = ({ children }: { children: React.ReactNode }) => (
  <Heading>
    <Tri color="#fff" />
    {children}
  </Heading>
);

const SidebarPane = () => (
  <Sidebar>
    <SidebarTop>
      <IconButton aria-label="Configure"><Gear /></IconButton>
    </SidebarTop>
    <Section $height={46}>
      <SectionHead><SectionTitle>Search</SectionTitle></SectionHead>
      <SearchRow onSubmit={(e) => e.preventDefault()}>
        <SearchInput aria-label="Item ID" placeholder="Enter the Item ID to search" />
        <IconButton type="submit" aria-label="Search" $gap={7}><SearchIcon /></IconButton>
        <IconButton type="button" aria-label="Search options"><Tri color="#2a2a2c" w={7} /></IconButton>
      </SearchRow>
    </Section>
    <Section $height={125}>
      <SectionHead>
        <SectionTitle>Quick Links</SectionTitle>
        <HeadLink href="#customize">Customize</HeadLink>
      </SectionHead>
      <LinkList $top={11}>
        {quickLinks.map((l) => (
          <LinkItem key={l.label}>
            {l.icon}
            <a href="#quick">{l.label}</a>
            <Chevrons />
          </LinkItem>
        ))}
      </LinkList>
    </Section>
    <Section $height={131} $grow>
      <SectionHead>
        <SectionTitle>Open Items</SectionTitle>
        <HeadLink href="#close" $dim>Close All</HeadLink>
      </SectionHead>
    </Section>
    <Section $height={114}>
      <SectionHead><SectionTitle>History</SectionTitle></SectionHead>
      <LinkList $top={3}>
        {historyItems.map((h) => (
          <LinkItem key={h.label}>
            <ItemIcon rev={h.rev} />
            <a href="#item">{h.label}</a>
          </LinkItem>
        ))}
      </LinkList>
    </Section>
    <NavPane>
      <Grip />
      {apps.map((a) => (
        <NavItem key={a.label} href="#app">
          {a.icon}
          {a.label}
        </NavItem>
      ))}
      <IconStrip>
        {stripIcons.map((icon, i) => (
          <svg key={i} width="16" height="16" viewBox="0 0 16 16">{icon}</svg>
        ))}
        <Chevrons />
      </IconStrip>
    </NavPane>
  </Sidebar>
);

const Diagram = () => (
  <Canvas>
    <Flow width="500" height="200" viewBox="0 0 500 200">
      <g stroke="#808285" strokeWidth="2">
        <path d="M55 134L186 131M316 138L420 136" />
        <path d="M183 126L205 131L183 136ZM414 131L436 136L414 141Z" fill="#b4b5b7" strokeWidth="1" />
      </g>
    </Flow>
    <Node $x={7} $y={102} $w={46} $fill="#4dff6e">
      <NodeHead $color="#8a8a8a" />
      <NodeIcon><HandIcon /></NodeIcon>
      Start
    </Node>
    <Node $x={208} $y={98} $w={106} $selected>
      <NodeHead $color="#0000f5" />
      <NodeIcon $on><FlagIcon /></NodeIcon>
      New Add Status Task 1
      <Pointer width="12" height="19" viewBox="0 0 12 19">
        <path d="M0.5 0.5V15L4 11.8L6.5 17.8L9 16.8L6.5 11H11.2Z" fill="#fff" stroke="#111" />
      </Pointer>
    </Node>
    <Node $x={438} $y={104} $w={46}>
      <NodeHead $color="#8a8a8a" />
      <NodeIcon><Checkered /></NodeIcon>
      Finish
    </Node>
  </Canvas>
);

const HandlersDialog = () => (
  <Dialog aria-label="Handlers">
    <DialogTitle>
      <PinIcon />
      <span>Handlers</span>
      <IconButton aria-label="Close"><Close color="#222" w={1} size={9} /></IconButton>
    </DialogTitle>
    <DialogBody>
      <HandlerSide>
        <HandlerTree>
          <TreeRow>
            <FlagIcon />
            <TreeLabel>New Add Status Task 1</TreeLabel>
          </TreeRow>
          {actions.map((a) => (
            <TreeRow key={a.label}>
              <Branch kind={a.kind} />
              {a.kind === "leaf" ? <HandlerIcon /> : <Folder open={a.kind === "minus"} />}
              <TreeLabel $state={a.kind === "leaf" ? "selected" : undefined}>{a.label}</TreeLabel>
            </TreeRow>
          ))}
        </HandlerTree>
        <SideButtons>
          <ToolButton $w={23} $h={19} aria-label="Move up"><Tri w={10} up /></ToolButton>
          <ToolButton $w={23} $h={19} aria-label="Move down"><Tri w={10} /></ToolButton>
          <ToolButton $w={23} $h={19} aria-label="Expand"><SplitArrows /></ToolButton>
          <ToolButton $w={23} $h={19} aria-label="Collapse"><SplitArrows inward /></ToolButton>
        </SideButtons>
      </HandlerSide>
      <HandlerForm onSubmit={(e) => e.preventDefault()}>
        <FormRow $top={10}>
          <span>Handler Type:</span>
          <TypeButtons>
            <ToolButton type="button" $w={23} $h={19} aria-label="Rule handler"><ScrollIcon /></ToolButton>
            <ToolButton type="button" $w={23} $h={19} $on aria-label="Action handler"><HandlerIcon /></ToolButton>
          </TypeButtons>
          <ToolLabel htmlFor="quorum">Quorum:</ToolLabel>
          <Quorum id="quorum" disabled />
        </FormRow>
        <FormRow $top={15}>
          <label htmlFor="task-action">Task Action:</label>
          <SelectWrap>
            <select id="task-action" defaultValue="Complete">
              <option>Complete</option>
            </select>
            <Tri />
          </SelectWrap>
        </FormRow>
        <FormRow $top={15}>
          <label htmlFor="action-handler">Action Handler:</label>
          <Field $height={22}>
            <input id="action-handler" defaultValue="EPM-set-status" />
            <DropButton type="button" aria-label="Choose handler"><ComboGlyph /></DropButton>
          </Field>
        </FormRow>
        <ArgArea>
          <ArgFrame>
            <ArgTable>
              <thead>
                <tr><th>Argument</th><th>Value(s)</th></tr>
              </thead>
              <tbody>
                <tr><td>-action</td><td>delete</td></tr>
              </tbody>
            </ArgTable>
          </ArgFrame>
          <ArgButtons>
            <TextButton type="button" $w={25}>Add</TextButton>
            <TextButton type="button" $w={45}>Remove</TextButton>
            <ArrowPair>
              <ToolButton type="button" $w={19} $h={19} aria-label="Up"><Tri w={10} up /></ToolButton>
              <ToolButton type="button" $w={19} $h={19} aria-label="Down"><Tri w={10} /></ToolButton>
            </ArrowPair>
          </ArgButtons>
        </ArgArea>
        <FormFoot>
          <TextButton type="button" $w={37}>Create</TextButton>
          <TextButton type="button" $w={35}>Delete</TextButton>
          <TextButton type="button" $w={37}>Modify</TextButton>
          <TextButton type="button" $w={27}>Help</TextButton>
        </FormFoot>
      </HandlerForm>
    </DialogBody>
  </Dialog>
);

const Callouts = () => (
  <>
    <Note $x={466} $y={47}>status task</Note>
    <Note $x={194} $y={226}>No hanlder on start action</Note>
    <Note $x={361} $y={285}>Handler to modify on status task</Note>
    <Note $x={684} $y={247} $color="#000">{"Add       EPM-set-status\nArgument as shown below"}</Note>
    <Frame />
    <Strokes width="470" height="370" viewBox="480 131 470 370">
      <g fill="none" stroke="#e61e25" strokeLinecap="round" strokeLinejoin="round" strokeWidth="5">
        <path d="M799 135Q790 163 777 201M767 187L777 203L794 191" />
        <path d="M604 313L489 443M488 435L486 446L501 446" />
        <path d="M866 374L914 477M902 475L916 486L926 474L933 472" />
      </g>
    </Strokes>
  </>
);

export default function App() {
  return (
    <Shell>
      <Global />
      <TitleBar>
        <IconButton aria-label="Back" $gap={7}><RoundArrow back /></IconButton>
        <IconButton aria-label="Back history" $gap={8}><Tri color="#222" w={7} /></IconButton>
        <IconButton aria-label="Forward" $gap={7}><RoundArrow /></IconButton>
        <IconButton aria-label="Forward history" $gap={4}><Tri color="#222" w={7} /></IconButton>
        <Title>Workflow Designer</Title>
        <Session>{"( anil ( anil ) - dba / DBA - [ IMC--2007111135 ] [  ] [ ] [  ]  [  ])"}</Session>
        <TitleActions>
          <IconButton aria-label="Workflow Designer"><Ring size={15} ink="#777" /></IconButton>
          <IconButton aria-label="Close"><OutlineClose /></IconButton>
        </TitleActions>
      </TitleBar>
      <Workspace>
        <SidebarPane />
        <Editor>
          <TabBar>
            <Tab>
              <TabFace>
                <Ring size={14} />
                <span>*Workflow Designer</span>
                <IconButton aria-label="Close tab"><Close color="#fff" w={2.5} /></IconButton>
              </TabFace>
              <svg width="30" height="25" viewBox="0 0 30 25">
                <path d="M0 0Q7 0 12 6L22 18Q27 25 30 25H0Z" fill="#000" />
              </svg>
            </Tab>
            <WindowButtons>
              <svg width="10" height="10" viewBox="0 0 10 10"><rect x="0.5" y="0.5" width="9" height="3" fill="#fff" stroke="#222" /></svg>
              <svg width="10" height="10" viewBox="0 0 10 10">
                <rect x="0.5" y="0.5" width="9" height="9" fill="#fff" stroke="#222" />
                <path d="M0 2.5H10" stroke="#222" />
              </svg>
            </WindowButtons>
          </TabBar>
          <EditorBody>
            <Toolbar>
              <ToolLabel htmlFor="template" $after={7}>Process Template</ToolLabel>
              <Field $width={388} $height={20}>
                <WarningIcon />
                <input id="template" defaultValue="Remove Status" />
                <DropButton aria-label="Choose template"><ComboGlyph /></DropButton>
              </Field>
              <ToolLabel as="span" $before={6} $after={12}>Template Type</ToolLabel>
              <Radio type="radio" name="type" id="type-process" defaultChecked />
              <ToolLabel htmlFor="type-process" $before={5} $after={13}>Process</ToolLabel>
              <Radio type="radio" name="type" id="type-task" />
              <ToolLabel htmlFor="type-task" $before={5}>Task</ToolLabel>
            </Toolbar>
            <Split>
              <LeftColumn>
                <TreeBox>
                  <TreeRow>
                    <TemplateIcon />
                    <TreeLabel $state="faded">Remove Status</TreeLabel>
                  </TreeRow>
                  <TreeRow>
                    <Branch kind="plus" />
                    <FlagIcon />
                    <TreeLabel>New Add Status Task 1</TreeLabel>
                  </TreeRow>
                </TreeBox>
                <TaskPanel>
                  <StageRow>
                    <Check type="checkbox" />
                    Set Stage to Available
                  </StageRow>
                  <NameRow>
                    <label htmlFor="task-name">Name:</label>
                    <input id="task-name" defaultValue="New Add Status Task 1" />
                  </NameRow>
                  <Instructions>
                    <legend>Instructions</legend>
                    <textarea aria-label="Instructions" />
                  </Instructions>
                  <PanelButtons>
                    <ToolButton $w={19} $h={19} aria-label="Properties"><PropIcon /></ToolButton>
                    <ToolButton $w={19} $h={19} $on aria-label="Task order"><SheetDown /></ToolButton>
                    <ToolButton $w={19} $h={19} $off disabled aria-label="Assign"><BlobIcon /></ToolButton>
                  </PanelButtons>
                  <ScrollBar>
                    <SideTri left />
                    <Thumb>
                      <svg width="8" height="7"><path d="M0.5 0V7M3.5 0V7M6.5 0V7" stroke="#666" /></svg>
                    </Thumb>
                    <SideTri />
                  </ScrollBar>
                </TaskPanel>
              </LeftColumn>
              <Diagram />
            </Split>
            <HandlersDialog />
            <Callouts />
          </EditorBody>
        </Editor>
      </Workspace>
    </Shell>
  );
}
